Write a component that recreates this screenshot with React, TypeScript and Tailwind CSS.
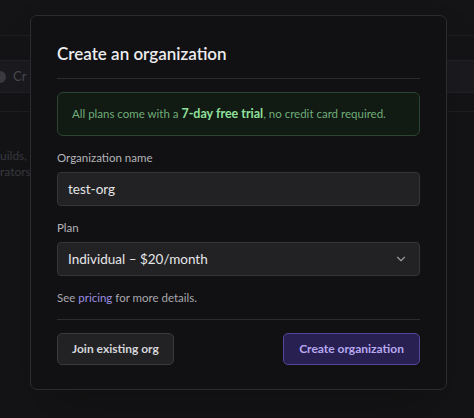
import { ChevronDown } from "lucide-react";

const font = { fontFamily: "Lato, 'Liberation Sans', sans-serif" };

export default function App() {
	return (
		<div
			className="relative w-[474px] h-[418px] overflow-hidden bg-[#141416]"
			style={font}
		>
			{/* page behind the dialog */}
			<div className="flex flex-col pt-[35px]">
				<div className="h-px bg-[#1e1e21]" />
				<div className="mt-[24px] flex h-[33px] items-center gap-[7px] border-y border-[#222226] bg-[#1a1a1f]">
					<span className="-ml-[6px] h-[12px] w-[12px] rounded-full bg-[#3a3a40]" />
					<span className="text-[13px] text-[#4a4a52]">Cr</span>
				</div>
				<div className="mt-[18px] h-px bg-[#1e1e21]" />
				<div className="mt-[36px] flex flex-col text-[12px] leading-[16px] text-[#3a3a40]">
					<span>uilds,</span>
					<span>rators</span>
				</div>
			</div>

			{/* dialog */}
			<div className="absolute left-[30px] top-[15px] flex h-[375px] w-[417px] flex-col rounded-[7px] border border-[#2c2c30] bg-[#111113] pl-[26px] pr-[26px] pt-[26px] shadow-2xl">
				<h2 className="text-[17px] font-semibold leading-[24px] text-[#ececee]">
					Create an organization
				</h2>
				<div className="mt-[12px] h-px bg-[#2c2c30]" />

				<div className="mt-[13px] flex h-[44px] items-center rounded-[6px] border border-[#2b4530] bg-[#121a14] px-[14px] text-[11.5px] text-[#6fae78]">
					<span>
						All plans come with a{" "}
						<span className="text-[12.5px] font-bold text-[#8fe09a]">
							7-day free trial
						</span>
						, no credit card required.
					</span>
				</div>

				<label className="mt-[15px] text-[11.5px] leading-[14px] text-[#b4b4ba]">
					Organization name
				</label>
				<div className="mt-[7px] flex h-[34px] items-center rounded-[4px] border border-[#35353a] bg-[#222225] px-[10px] text-[13.5px] text-[#e6e6e8]">
					test-org
				</div>

				<label className="mt-[15px] text-[11.5px] leading-[14px] text-[#b4b4ba]">
					Plan
				</label>
				<div className="mt-[7px] flex h-[34px] items-center justify-between rounded-[4px] border border-[#35353a] bg-[#222225] pl-[10px] pr-[11px] text-[13.5px] text-[#e6e6e8]">
					<span>Individual – $20/month</span>
					<ChevronDown size={14} strokeWidth={2} className="text-[#9a9aa0]" />
				</div>

				<p className="mt-[15px] text-[11.5px] leading-[14px] text-[#a8a8ae]">
					See <span className="text-[#9c8fe0]">pricing</span> for more details.
				</p>
				<div className="mt-[14px] h-px bg-[#2c2c30]" />

				<div className="mt-[13px] flex items-center justify-between">
					<button
						type="button"
						className="h-[32px] rounded-[5px] border border-[#3a3a3f] bg-[#222225] px-[14px] text-[12px] font-bold text-[#d6d6da]"
					>
						Join existing org
					</button>
					<button
						type="button"
						className="h-[32px] rounded-[5px] border border-[#54469a] bg-[#272050] px-[15px] text-[12px] font-bold text-[#b8a8f0]"
					>
						Create organization
					</button>
				</div>
			</div>
		</div>
	);
}
